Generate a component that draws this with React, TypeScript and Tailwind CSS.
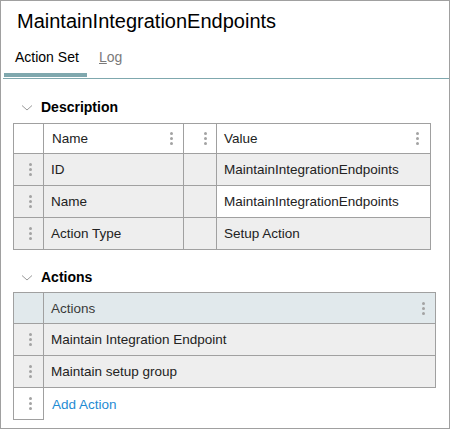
import React from "react";

const FONT = { fontFamily: "'Liberation Sans', Arial, sans-serif" };

function Kebab() {
  return (
    <span className="flex flex-col gap-[2px]">
      <span className="block h-[3px] w-[3px] rounded-full bg-[#a3a3a3]" />
      <span className="block h-[3px] w-[3px] rounded-full bg-[#a3a3a3]" />
      <span className="block h-[3px] w-[3px] rounded-full bg-[#a3a3a3]" />
    </span>
  );
}

function Chevron() {
  return (
    <svg width="12" height="7" viewBox="0 0 12 7" className="mr-[8px]">
      <polyline points="1,1.5 6,6 11,1.5" fill="none" stroke="#9a9a9a" strokeWidth="1" />
    </svg>
  );
}

function SectionTitle({ label, className }: { label: string; className: string }) {
  return (
    <div className={`flex h-[20px] items-center pl-[20px] ${className}`}>
      <Chevron />
      <span className="pt-[1px] text-[14px] font-bold text-black">{label}</span>
    </div>
  );
}

const cell = "flex items-center border-r border-b border-[#a0a0a0]";

const descRows = [
  { name: "ID", value: "MaintainIntegrationEndpoints", editable: false },
  { name: "Name", value: "MaintainIntegrationEndpoints", editable: true },
  { name: "Action Type", value: "Setup Action", editable: false },
];

const actions = ["Maintain Integration Endpoint", "Maintain setup group"];

export default function App() {
  return (
    <div
      className="h-[429px] w-[450px] border border-[#a0a0a0] bg-white text-[13.5px] text-[#222]"
      style={FONT}
    >
      <div className="flex h-[40px] items-center pl-[16px] text-[20px] text-black">
        MaintainIntegrationEndpoints
      </div>

      <div className="ml-[2px]">
        <div className="flex h-[32px] items-center text-[14px]">
          <div className="ml-[1px] w-[83px] pl-[11px] text-black">Action Set</div>
          <div className="pl-[12px] text-[#7a7a7a]">
            <span className="underline">L</span>og
          </div>
        </div>
        <div className="ml-[1px] h-[4px] w-[83px] bg-[#7fa8ae]" />
        <div className="mt-[1px] h-px bg-[#7fa8ae]" />
      </div>

      <SectionTitle label="Description" className="mt-[18px] mb-[6px]" />

      <div className="ml-[12px] grid w-[418px] grid-cols-[30px_140px_33px_214px] border-t border-l border-[#a0a0a0]">
        <div className={`${cell} h-[30px] bg-white`} />
        <div className={`${cell} h-[30px] justify-between bg-white pr-[10px] pl-[8px]`}>
          <span className="pt-[2px]">Name</span>
          <Kebab />
        </div>
        <div className={`${cell} h-[30px] justify-end bg-white pr-[9px]`}>
          <Kebab />
        </div>
        <div className={`${cell} h-[30px] justify-between bg-white pr-[11px] pl-[7px]`}>
          <span className="pt-[2px]">Value</span>
          <Kebab />
        </div>

        {descRows.map((row) => (
          <React.Fragment key={row.name}>
            <div className={`${cell} h-[32px] justify-center bg-[#eeeeee] pl-[3px]`}>
              <Kebab />
            </div>
            <div className={`${cell} h-[32px] bg-[#eeeeee] pt-[2px] pl-[7px]`}>{row.name}</div>
            <div className={`${cell} h-[32px] bg-[#eeeeee]`} />
            <div
              className={`${cell} h-[32px] pt-[2px] pl-[7px] ${row.editable ? "bg-white" : "bg-[#eeeeee]"}`}
            >
              {row.value}
            </div>
          </React.Fragment>
        ))}
      </div>

      <SectionTitle label="Actions" className="mt-[17px] mb-[5px]" />

      <div className="ml-[12px] grid w-[423px] grid-cols-[30px_392px] border-t border-l border-[#a0a0a0]">
        <div className={`${cell} h-[31px] bg-[#e1e9ec]`} />
        <div className={`${cell} h-[31px] justify-between bg-[#e1e9ec] pr-[10px] pl-[7px] text-[#3a3a3a]`}>
          <span className="pt-[2px]">Actions</span>
          <Kebab />
        </div>

        {actions.map((a) => (
          <React.Fragment key={a}>
            <div className={`${cell} h-[32px] justify-center bg-[#eeeeee] pl-[3px]`}>
              <Kebab />
            </div>
            <div className={`${cell} h-[32px] bg-[#eeeeee] pt-[2px] pl-[7px]`}>{a}</div>
          </React.Fragment>
        ))}

        <div className={`${cell} h-[32px] justify-center bg-white pl-[3px]`}>
          <Kebab />
        </div>
        <div className="flex h-[32px] items-center pt-[2px] pl-[8px] text-[#1f8bd3]">Add Action</div>
      </div>
    </div>
  );
}
